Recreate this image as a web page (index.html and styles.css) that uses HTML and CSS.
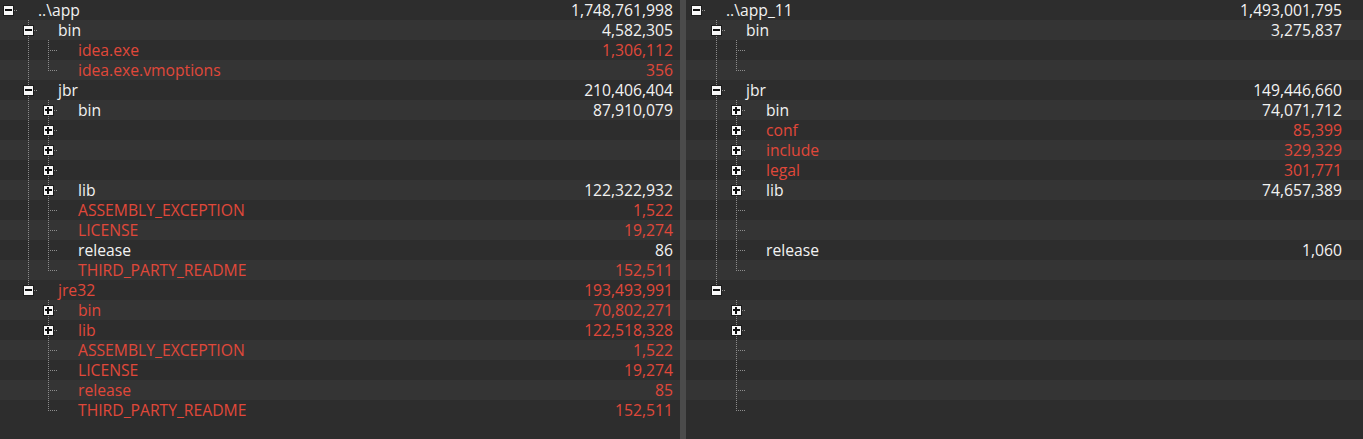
FILE: index.html
```html
<!DOCTYPE html>
<html>
<head>
<meta charset="utf-8">
<link rel="stylesheet" href="styles.css">
</head>
<body>
<div class="app">
  <div class="pane pane-left">
    <div class="row"><span class="c r"><i class="box minus"></i></span><span class="name">..\app</span><span class="size">1,748,761,998</span></div>
    <div class="row"><span class="c"></span><span class="c t"><i class="box minus"></i></span><span class="name">bin</span><span class="size">4,582,305</span></div>
    <div class="row red"><span class="c"></span><span class="c v"></span><span class="c t"></span><span class="name">idea.exe</span><span class="size">1,306,112</span></div>
    <div class="row red"><span class="c"></span><span class="c v"></span><span class="c l"></span><span class="name">idea.exe.vmoptions</span><span class="size">356</span></div>
    <div class="row"><span class="c"></span><span class="c t"><i class="box minus"></i></span><span class="name">jbr</span><span class="size">210,406,404</span></div>
    <div class="row"><span class="c"></span><span class="c v"></span><span class="c t"><i class="box plus"></i></span><span class="name">bin</span><span class="size">87,910,079</span></div>
    <div class="row"><span class="c"></span><span class="c v"></span><span class="c t"><i class="box plus"></i></span><span class="name"></span><span class="size"></span></div>
    <div class="row"><span class="c"></span><span class="c v"></span><span class="c t"><i class="box plus"></i></span><span class="name"></span><span class="size"></span></div>
    <div class="row"><span class="c"></span><span class="c v"></span><span class="c t"><i class="box plus"></i></span><span class="name"></span><span class="size"></span></div>
    <div class="row"><span class="c"></span><span class="c v"></span><span class="c t"><i class="box plus"></i></span><span class="name">lib</span><span class="size">122,322,932</span></div>
    <div class="row red"><span class="c"></span><span class="c v"></span><span class="c t"></span><span class="name">ASSEMBLY_EXCEPTION</span><span class="size">1,522</span></div>
    <div class="row red"><span class="c"></span><span class="c v"></span><span class="c t"></span><span class="name">LICENSE</span><span class="size">19,274</span></div>
    <div class="row"><span class="c"></span><span class="c v"></span><span class="c t"></span><span class="name">release</span><span class="size">86</span></div>
    <div class="row red"><span class="c"></span><span class="c v"></span><span class="c l"></span><span class="name">THIRD_PARTY_README</span><span class="size">152,511</span></div>
    <div class="row red"><span class="c"></span><span class="c l"><i class="box minus"></i></span><span class="name">jre32</span><span class="size">193,493,991</span></div>
    <div class="row red"><span class="c"></span><span class="c"></span><span class="c t"><i class="box plus"></i></span><span class="name">bin</span><span class="size">70,802,271</span></div>
    <div class="row red"><span class="c"></span><span class="c"></span><span class="c t"><i class="box plus"></i></span><span class="name">lib</span><span class="size">122,518,328</span></div>
    <div class="row red"><span class="c"></span><span class="c"></span><span class="c t"></span><span class="name">ASSEMBLY_EXCEPTION</span><span class="size">1,522</span></div>
    <div class="row red"><span class="c"></span><span class="c"></span><span class="c t"></span><span class="name">LICENSE</span><span class="size">19,274</span></div>
    <div class="row red"><span class="c"></span><span class="c"></span><span class="c t"></span><span class="name">release</span><span class="size">85</span></div>
    <div class="row red"><span class="c"></span><span class="c"></span><span class="c l"></span><span class="name">THIRD_PARTY_README</span><span class="size">152,511</span></div>
  </div>
  <div class="splitter"></div>
  <div class="pane pane-right">
    <div class="row"><span class="c r"><i class="box minus"></i></span><span class="name">..\app_11</span><span class="size">1,493,001,795</span></div>
    <div class="row"><span class="c"></span><span class="c t"><i class="box minus"></i></span><span class="name">bin</span><span class="size">3,275,837</span></div>
    <div class="row"><span class="c"></span><span class="c v"></span><span class="c t"></span><span class="name"></span><span class="size"></span></div>
    <div class="row"><span class="c"></span><span class="c v"></span><span class="c l"></span><span class="name"></span><span class="size"></span></div>
    <div class="row"><span class="c"></span><span class="c t"><i class="box minus"></i></span><span class="name">jbr</span><span class="size">149,446,660</span></div>
    <div class="row"><span class="c"></span><span class="c v"></span><span class="c t"><i class="box plus"></i></span><span class="name">bin</span><span class="size">74,071,712</span></div>
    <div class="row red"><span class="c"></span><span class="c v"></span><span class="c t"><i class="box plus"></i></span><span class="name">conf</span><span class="size">85,399</span></div>
    <div class="row red"><span class="c"></span><span class="c v"></span><span class="c t"><i class="box plus"></i></span><span class="name">include</span><span class="size">329,329</span></div>
    <div class="row red"><span class="c"></span><span class="c v"></span><span class="c t"><i class="box plus"></i></span><span class="name">legal</span><span class="size">301,771</span></div>
    <div class="row"><span class="c"></span><span class="c v"></span><span class="c t"><i class="box plus"></i></span><span class="name">lib</span><span class="size">74,657,389</span></div>
    <div class="row"><span class="c"></span><span class="c v"></span><span class="c t"></span><span class="name"></span><span class="size"></span></div>
    <div class="row"><span class="c"></span><span class="c v"></span><span class="c t"></span><span class="name"></span><span class="size"></span></div>
    <div class="row"><span class="c"></span><span class="c v"></span><span class="c t"></span><span class="name">release</span><span class="size">1,060</span></div>
    <div class="row"><span class="c"></span><span class="c v"></span><span class="c l"></span><span class="name"></span><span class="size"></span></div>
    <div class="row"><span class="c"></span><span class="c l"><i class="box minus"></i></span><span class="name"></span><span class="size"></span></div>
    <div class="row"><span class="c"></span><span class="c"></span><span class="c t"><i class="box plus"></i></span><span class="name"></span><span class="size"></span></div>
    <div class="row"><span class="c"></span><span class="c"></span><span class="c t"><i class="box plus"></i></span><span class="name"></span><span class="size"></span></div>
    <div class="row"><span class="c"></span><span class="c"></span><span class="c t"></span><span class="name"></span><span class="size"></span></div>
    <div class="row"><span class="c"></span><span class="c"></span><span class="c t"></span><span class="name"></span><span class="size"></span></div>
    <div class="row"><span class="c"></span><span class="c"></span><span class="c t"></span><span class="name"></span><span class="size"></span></div>
    <div class="row"><span class="c"></span><span class="c"></span><span class="c l"></span><span class="name"></span><span class="size"></span></div>
  </div>
</div>
</body>
</html>
```
FILE: styles.css
```css
html, body {
  margin: 0;
  padding: 0;
  background: #2d2d2d;
}
body {
  font-family: "Open Sans", "Noto Sans", sans-serif;
  font-size: 15.7px;
  color: #f2f2f2;
}
.app {
  display: flex;
  height: 439px;
  overflow: hidden;
}
.pane {
  display: flex;
  flex-direction: column;
  background: #2d2d2d;
}
.pane-left {
  width: 680px;
  flex: none;
}
.pane-right {
  flex: 1;
}
.splitter {
  width: 6px;
  flex: none;
  background: #4b4b4b;
}
.row {
  display: flex;
  align-items: center;
  height: 20px;
  line-height: 20px;
  white-space: nowrap;
  padding-left: 3px;
}
.pane-right .row {
  padding-left: 5px;
}
.row:nth-child(even) {
  background: #343434;
}
.row.red {
  color: #e0483a;
}
.name {
  flex: 1;
  padding-left: 15px;
}
.size {
  padding-right: 7px;
  text-align: right;
}
.pane-right .size {
  padding-right: 21px;
}
.c {
  flex: none;
  width: 20px;
  height: 20px;
  display: flex;
  align-items: flex-start;
}
.v {
  background: repeating-linear-gradient(to bottom, #8c8c8c 0 1px, transparent 1px 2px) 5px 0 / 1px 20px no-repeat;
}
.t {
  background:
    repeating-linear-gradient(to right, #8c8c8c 0 1px, transparent 1px 2px) 5px 10px / 10px 1px no-repeat,
    repeating-linear-gradient(to bottom, #8c8c8c 0 1px, transparent 1px 2px) 5px 0 / 1px 20px no-repeat;
}
.l {
  background:
    repeating-linear-gradient(to right, #8c8c8c 0 1px, transparent 1px 2px) 5px 10px / 10px 1px no-repeat,
    repeating-linear-gradient(to bottom, #8c8c8c 0 1px, transparent 1px 2px) 5px 0 / 1px 10px no-repeat;
}
.r {
  background: repeating-linear-gradient(to right, #8c8c8c 0 1px, transparent 1px 2px) 5px 10px / 10px 1px no-repeat;
}
.box {
  display: block;
  width: 11px;
  height: 11px;
  margin-top: 5px;
  box-sizing: border-box;
  border: 1px solid #1c1c1c;
  background-color: #f7f7f7;
}
.minus {
  background-image: linear-gradient(#111, #111);
  background-size: 7px 2px;
  background-position: 1px 3px;
  background-repeat: no-repeat;
}
.plus {
  background-image: linear-gradient(#111, #111), linear-gradient(#111, #111);
  background-size: 7px 2px, 2px 7px;
  background-position: 1px 3px, 3px 1px;
  background-repeat: no-repeat;
}
```
